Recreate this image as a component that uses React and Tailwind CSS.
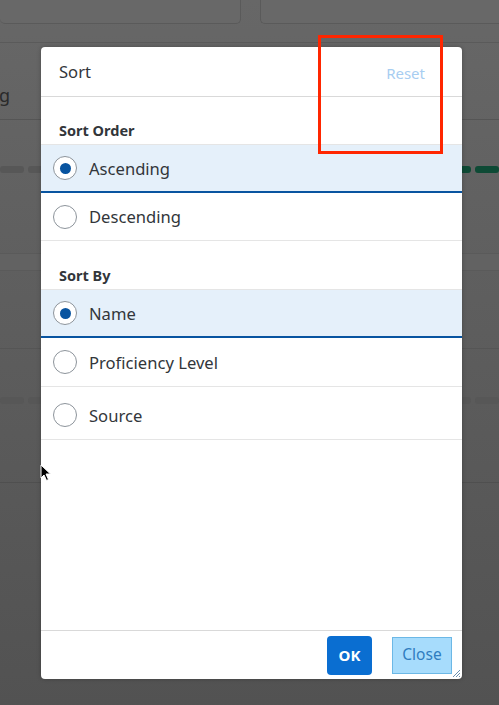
import React from 'react';

const font = { fontFamily: '"Noto Sans", "Liberation Sans", sans-serif' };

const Radio = ({ checked }) => (
  <span className="w-[24px] h-[24px] rounded-full border border-[#8d949b] bg-white flex items-center justify-center shrink-0">
    {checked && <span className="w-[11px] h-[11px] rounded-full bg-[#0854a0]" />}
  </span>
);

const Option = ({ label, checked, className = '' }) => (
  <div
    className={`flex items-center gap-[12px] pl-[12px] ${
      checked ? 'bg-[#e5f0fa] border-b-2 border-[#0854a0]' : 'bg-white border-b border-[#e5e5e5]'
    } ${className}`}
  >
    <Radio checked={checked} />
    <span className="text-[16.6px] text-[#32363a] pt-[2px]">{label}</span>
  </div>
);

const SectionTitle = ({ children, className = '' }) => (
  <div className={`flex items-end pl-[18px] border-b border-[#e5e5e5] ${className}`}>
    <span className="text-[14.5px] font-bold text-[#32363a]">{children}</span>
  </div>
);

const Bars = ({ green }) => (
  <div className="flex gap-[4px] h-[7px]">
    {Array.from({ length: 18 }).map((_, i) => (
      <div
        key={i}
        className={`w-[25px] rounded-[3px] ${green && i > 14 ? 'bg-[#0e4a35]' : 'bg-[#575757]'}`}
      />
    ))}
  </div>
);

// dimmed page behind the dialog
const Backdrop = () => (
  <div className="absolute inset-0 bg-gradient-to-b from-[#676767] to-[#525252] flex flex-col">
    <div className="flex gap-[19px] h-[24px]">
      <div className="w-[241px] rounded-b-[5px] bg-[#686868] border-b border-r border-[#5a5a5a]" />
      <div className="flex-1 rounded-bl-[5px] bg-[#686868] border-b border-l border-[#5a5a5a]" />
    </div>
    <div className="h-[18px]" />
    <div className="border-t border-[#5a5a5a] h-[77px] flex items-center">
      <span className="text-[18px] text-[#2a2a2a] mt-[28px] -ml-[1px]" style={font}>g</span>
    </div>
    <div className="border-t border-[#555] h-[134px] pt-[46px]">
      <Bars green />
    </div>
    <div className="border-t border-[#5a5a5a] h-[17px] bg-[#626262]" />
    <div className="border-t border-[#5a5a5a] h-[78px]" />
    <div className="border-t border-[#555] h-[134px] pt-[48px]">
      <Bars />
    </div>
    <div className="border-t border-[#4f4f4f] flex-1" />
  </div>
);

export default function App() {
  return (
    <div className="relative w-full h-[705px] overflow-hidden" style={font}>
      <Backdrop />

      {/* dialog */}
      <div className="absolute left-[41px] top-[47px] w-[421px] h-[632px] bg-white rounded-[4px] shadow-[0_0_4px_rgba(0,0,0,0.25)] flex flex-col overflow-hidden">
        <div className="h-[50px] flex items-center justify-between pl-[18px] pr-[37px] border-b border-[#d9d9d9] shrink-0">
          <span className="text-[16.6px] text-[#32363a] pt-[1px]">Sort</span>
          <span className="text-[15px] text-[#a7cdf1] mt-[4px]">Reset</span>
        </div>

        <SectionTitle className="h-[48px] pb-[2px]">Sort Order</SectionTitle>
        <Option label="Ascending" checked className="h-[48px]" />
        <Option label="Descending" className="h-[48px]" />

        <SectionTitle className="h-[49px] pb-[2px]">Sort By</SectionTitle>
        <Option label="Name" checked className="h-[48px]" />
        <Option label="Proficiency Level" className="h-[49px]" />
        <Option label="Source" className="h-[53px] pt-[4px]" />

        <div className="flex-1" />

        <div className="h-[49px] border-t border-[#d9d9d9] flex items-center justify-end gap-[20px] pr-[10px] shrink-0">
          <button className="w-[45px] h-[39px] rounded-[4px] bg-[#0a6ed1] text-white text-[15px] font-bold">
            OK
          </button>
          <button className="w-[60px] h-[37px] bg-[#a7dcfc] border border-[#6cb8e6] text-[#2f7dc0] text-[15.5px]">
            Close
          </button>
        </div>

        {/* resize grip */}
        <svg className="absolute right-[1px] bottom-[1px]" width="9" height="9" viewBox="0 0 9 9">
          <path d="M1 8L8 1M4 8L8 4M7 8L8 7" stroke="#6a8fb0" strokeWidth="1" />
        </svg>
      </div>

      {/* annotation box */}
      <div className="absolute left-[318px] top-[35px] w-[125px] h-[119px] border-[3.5px] border-[#ff2600]" />

      {/* mouse pointer */}
      <svg className="absolute left-[40px] top-[464px]" width="12" height="18" viewBox="0 0 12 18">
        <path d="M1 1L1 14L4 11L6.5 16.5L8.5 15.5L6 10L10.5 10Z" fill="#000" stroke="#fff" strokeWidth="1" />
      </svg>
    </div>
  );
}
